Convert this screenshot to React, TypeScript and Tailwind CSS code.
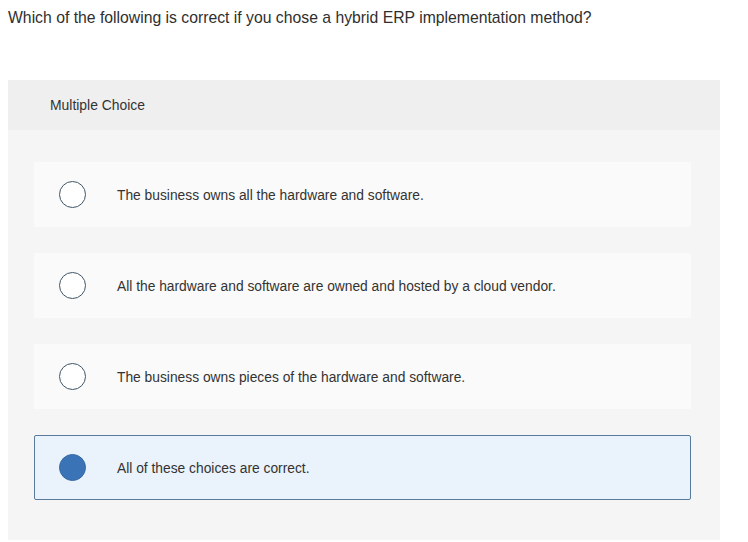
import React from "react";

const choices = [
  "The business owns all the hardware and software.",
  "All the hardware and software are owned and hosted by a cloud vendor.",
  "The business owns pieces of the hardware and software.",
  "All of these choices are correct.",
];

const App = () => {
  const selected = 3;

  return (
    <div className="w-[748px] h-[542px] overflow-hidden bg-white font-['Liberation_Sans',Arial,sans-serif] text-[#333]">
      <p className="pl-2 pt-[9px] text-[15.75px] leading-[18px] text-[#2f2f2f]">
        Which of the following is correct if you chose a hybrid ERP implementation method?
      </p>

      <div className="ml-2 mt-[53px] w-[712px] bg-[#f5f5f5] pb-10">
        <div className="h-[50px] flex items-center pl-[42px] pt-[1px] bg-[#efefef] text-[13.9px] text-[#333]">
          Multiple Choice
        </div>

        <div className="flex flex-col gap-[26px] pt-8 pl-[26px] pr-[29px]">
          {choices.map((text, i) => (
            <div
              key={i}
              className={
                i === selected
                  ? "h-[65px] flex items-center rounded-[2px] border border-[#587b9c] bg-[#eaf2fb] pl-6"
                  : "h-[65px] flex items-center bg-[#fafafa] pl-[25px]"
              }
            >
              {i === selected ? (
                <span className="w-[27px] h-[27px] rounded-full bg-[#3a74b7] border border-[#3468a5]" />
              ) : (
                <span className="w-[27px] h-[27px] rounded-full border-[1.5px] border-[#3f5566] bg-white" />
              )}
              <span className="ml-[31px] pt-[4px] text-[13.8px] text-[#333]">{text}</span>
            </div>
          ))}
        </div>
      </div>
    </div>
  );
};

export default App;
